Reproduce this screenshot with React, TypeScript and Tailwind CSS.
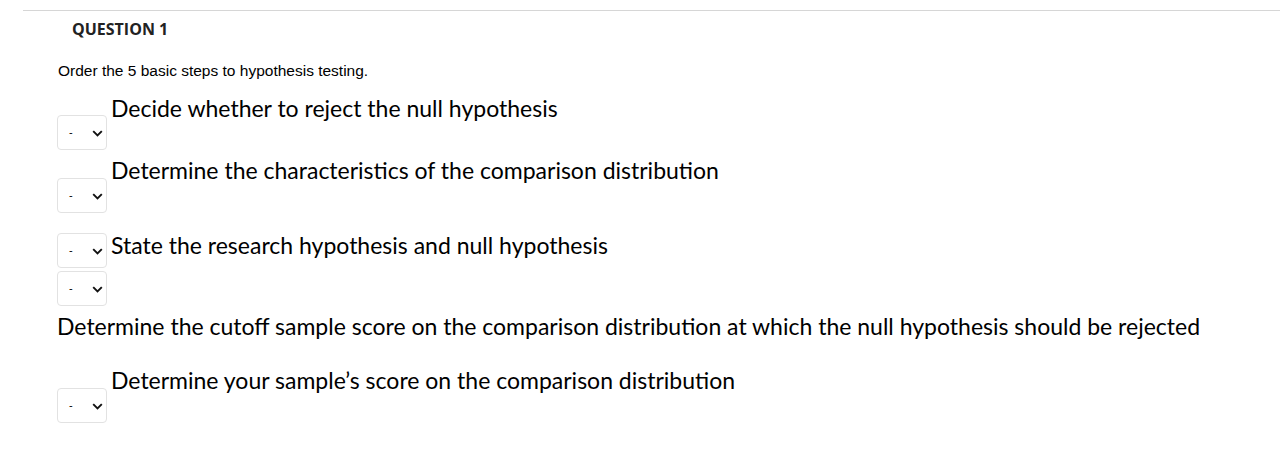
const steps = [
  "Decide whether to reject the null hypothesis",
  "Determine the characteristics of the comparison distribution",
  "State the research hypothesis and null hypothesis",
  "Determine the cutoff sample score on the comparison distribution at which the null hypothesis should be rejected",
  "Determine your sample’s score on the comparison distribution",
];

const body = "font-['Lato','Liberation_Sans',sans-serif] text-[23px] leading-[28px] text-black";

const OrderSelect = ({ className = "" }: { className?: string }) => (
  <div
    className={`relative h-[35px] w-[50px] shrink-0 rounded-[4px] border border-[#e2e2e2] bg-white ${className}`}
  >
    <span className="absolute left-[11px] top-[9px] font-['Liberation_Sans',sans-serif] text-[11px] leading-[14px] text-black">
      -
    </span>
    <svg
      className="absolute left-[34px] top-[14px]"
      width="11"
      height="7"
      viewBox="0 0 11 7"
      fill="none"
    >
      <path d="M1.2 1.2 L5.5 5.5 L9.8 1.2" stroke="#111" strokeWidth="1.9" />
    </svg>
  </div>
);

export default function App() {
  return (
    <div className="h-[451px] w-[1280px] overflow-hidden bg-white">
      <div className="ml-[23px] mt-[10px] h-[1px] bg-[#d6d6d6]" />
      <h2 className="ml-[72px] mt-[8px] font-['Open_Sans',sans-serif] text-[16px] font-bold leading-[20px] text-[#222]">
        QUESTION 1
      </h2>
      <p className="ml-[58px] mt-[23px] font-['Liberation_Sans',sans-serif] text-[15.5px] leading-[18px] text-black">
        Order the 5 basic steps to hypothesis testing.
      </p>

      <div className={`ml-[57px] ${body}`}>
        <div className="mt-[14px] flex">
          <OrderSelect className="mt-[21px]" />
          <p className="ml-[4px]">{steps[0]}</p>
        </div>
        <div className="mt-[6px] flex">
          <OrderSelect className="mt-[22px]" />
          <p className="ml-[4px]">{steps[1]}</p>
        </div>
        <div className="mt-[18px] flex">
          <OrderSelect className="mt-[2px]" />
          <p className="ml-[4px]">{steps[2]}</p>
        </div>
        <OrderSelect className="mt-[3px]" />
        <p className="mt-[6px]">{steps[3]}</p>
        <div className="mt-[26px] flex">
          <OrderSelect className="mt-[22px]" />
          <p className="ml-[4px]">{steps[4]}</p>
        </div>
      </div>
    </div>
  );
}
